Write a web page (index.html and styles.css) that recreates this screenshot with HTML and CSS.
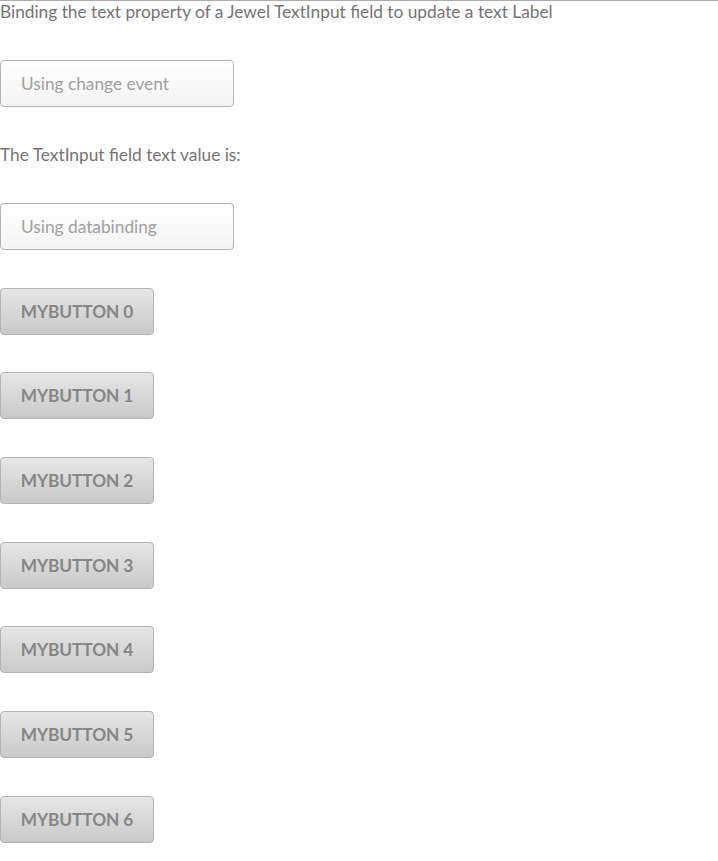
FILE: index.html
```html
<!DOCTYPE html>
<html lang="en">
  <head>
    <meta charset="UTF-8" />
    <meta name="viewport" content="width=device-width, initial-scale=1.0" />
    <title>Jewel TextInput binding</title>
    <link rel="stylesheet" href="styles.css">
  </head>
  <body>
    <div class="app">
      <span class="label">Binding the text property of a Jewel TextInput field to update a text Label</span>
      <input type="text" class="text-input" placeholder="Using change event" />
      <span class="label">The TextInput field text value is:</span>
      <input type="text" class="text-input" placeholder="Using databinding" />
      <button class="btn">MyButton 0</button>
      <button class="btn">MyButton 1</button>
      <button class="btn">MyButton 2</button>
      <button class="btn">MyButton 3</button>
      <button class="btn">MyButton 4</button>
      <button class="btn">MyButton 5</button>
      <button class="btn">MyButton 6</button>
    </div>
  </body>
</html>
```

FILE: styles.css
```css
* {
  margin: 0;
  padding: 0;
  box-sizing: border-box;
}
body {
  font-family: Lato, "Open Sans", sans-serif;
  font-size: 17.3px;
  color: #808080;
  background: #fff;
}
.app {
  display: flex;
  flex-direction: column;
  align-items: flex-start;
  gap: 37.67px;
  border-top: 1px solid #acacac;
}
.label {
  display: block;
  line-height: 21px;
  color: #747474;
}
.text-input {
  width: 234px;
  height: 47px;
  padding: 0 20px;
  font-family: inherit;
  font-size: 17.3px;
  color: #666;
  border: 1px solid #b3b3b3;
  border-radius: 4px;
  background: linear-gradient(#ffffff, #f3f3f3);
  outline: none;
}
.text-input::placeholder {
  color: #a0a0a0;
}
.btn {
  width: 154px;
  height: 47px;
  font-family: inherit;
  font-size: 17.3px;
  font-weight: bold;
  text-transform: uppercase;
  letter-spacing: -0.1px;
  color: #868686;
  border: 1px solid #b3b3b3;
  border-radius: 4px;
  background: linear-gradient(#e6e6e6, #c9c9c9);
}
```
